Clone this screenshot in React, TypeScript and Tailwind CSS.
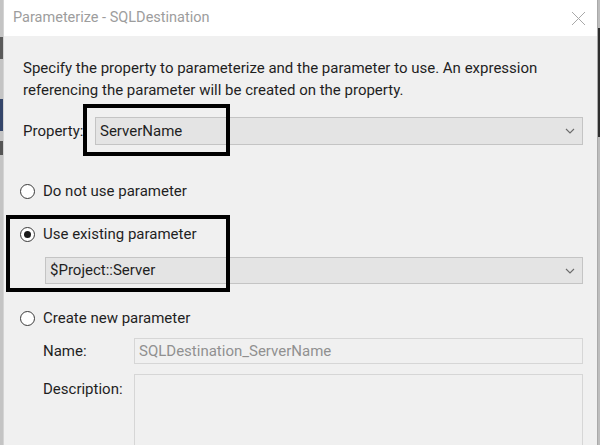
import React from "react";

function Chevron() {
  return (
    <svg width="10" height="6" viewBox="0 0 10 6" className="shrink-0">
      <path d="M1 1 L5 5 L9 1" fill="none" stroke="#6b6b6b" strokeWidth="1.1" />
    </svg>
  );
}

function Radio({ checked }: { checked?: boolean }) {
  return (
    <div className="w-[15px] h-[15px] rounded-full border border-[#3a3a3a] bg-white flex items-center justify-center shrink-0">
      {checked && <div className="w-[7px] h-[7px] rounded-full bg-[#1a1a1a]" />}
    </div>
  );
}

export default function App() {
  return (
    <div className="relative w-[600px] h-[445px] overflow-hidden flex bg-[#f0f0f0] font-[Roboto,sans-serif]">
      {/* left background strip */}
      <div className="w-[3px] flex flex-col bg-[#c4c4c4]">
        <div className="h-[37px]" />
        <div className="h-[22px] bg-[#5a5a5a]" />
        <div className="h-[40px]" />
        <div className="h-[32px] bg-[#34456a]" />
        <div className="h-[10px]" />
        <div className="h-[14px] bg-[#555]" />
      </div>
      {/* dialog */}
      <div className="flex-1 flex flex-col border-l border-[#d4d4d4] min-w-0">
        <div className="h-[36px] bg-white flex items-center justify-between pl-[9px] pr-[11px] shrink-0">
          <span className="text-[14.5px] text-[#9d9d9d] leading-none">Parameterize - SQLDestination</span>
          <svg width="15" height="15" viewBox="0 0 15 15">
            <path d="M1 1 L14 14 M14 1 L1 14" stroke="#a8a8a8" strokeWidth="1" fill="none" />
          </svg>
        </div>
        <div className="flex-1 flex flex-col pl-[19px] pr-[14px] text-[15px] text-[#1f1f1f]">
          <p className="mt-[21px] leading-[22px]">
            Specify the property to parameterize and the parameter to use. An expression
            <br />
            referencing the parameter will be created on the property.
          </p>
          <div className="mt-[16px] flex items-center">
            <span className="w-[72px] shrink-0">Property:</span>
            <div className="flex-1 h-[28px] bg-[#e4e4e4] border border-[#c4c4c4] flex items-center justify-between pl-[4px] pr-[7px]">
              <span>ServerName</span>
              <Chevron />
            </div>
          </div>
          <div className="mt-[36px] h-[20px] flex items-center -ml-[3px]">
            <Radio />
            <span className="ml-[8px]">Do not use parameter</span>
          </div>
          <div className="mt-[23px] h-[20px] flex items-center -ml-[3px]">
            <Radio checked />
            <span className="ml-[8px]">Use existing parameter</span>
          </div>
          <div className="mt-[13px] ml-[22px] h-[27px] bg-[#e4e4e4] border border-[#c4c4c4] flex items-center justify-between pl-[4px] pr-[7px]">
            <span>$Project::Server</span>
            <Chevron />
          </div>
          <div className="mt-[24px] h-[20px] flex items-center -ml-[3px]">
            <Radio />
            <span className="ml-[8px]">Create new parameter</span>
          </div>
          <div className="mt-[10px] ml-[20px] flex items-center">
            <span className="w-[91px] shrink-0">Name:</span>
            <div className="flex-1 h-[26px] border border-[#d6d6d6] bg-[#f0f0f0] flex items-center pl-[4px] text-[#909090]">
              SQLDestination_ServerName
            </div>
          </div>
          <div className="mt-[10px] ml-[20px] flex items-start">
            <span className="w-[91px] shrink-0 pt-[4px] leading-[22px]">Description:</span>
            <div className="flex-1 h-[100px] border border-[#d6d6d6] bg-[#f0f0f0]" />
          </div>
        </div>
      </div>
      {/* right background strip */}
      <div className="w-[3px] flex flex-col bg-[#bdbdbd] border-l border-[#a9a9a9]">
        <div className="h-[28px]" />
        <div className="h-[109px] bg-[#2e2e2e]" />
      </div>
      {/* highlight boxes */}
      <div className="absolute left-[83px] top-[104px] w-[147px] h-[52px] border-[4px] border-black pointer-events-none" />
      <div className="absolute left-[6px] top-[215px] w-[224px] h-[77px] border-[4px] border-black pointer-events-none" />
    </div>
  );
}
